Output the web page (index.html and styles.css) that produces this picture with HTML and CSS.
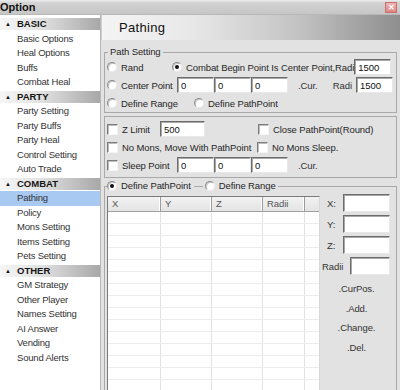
FILE: index.html
```html
<!DOCTYPE html>
<html>
<head>
<meta charset="utf-8">
<link rel="stylesheet" href="styles.css">
</head>
<body>
<div class="titlebar"><span class="title">Option</span><span class="close">✕</span></div>
<div class="window">
  <nav class="sidebar">
    <div class="cat"><span class="tri">▲</span>BASIC</div>
    <div class="item">Basic Options</div>
    <div class="item">Heal Options</div>
    <div class="item">Buffs</div>
    <div class="item">Combat Heal</div>
    <div class="cat"><span class="tri">▲</span>PARTY</div>
    <div class="item">Party Setting</div>
    <div class="item">Party Buffs</div>
    <div class="item">Party Heal</div>
    <div class="item">Control Setting</div>
    <div class="item">Auto Trade</div>
    <div class="cat"><span class="tri">▲</span>COMBAT</div>
    <div class="item sel">Pathing</div>
    <div class="item">Policy</div>
    <div class="item">Mons Setting</div>
    <div class="item">Items Setting</div>
    <div class="item">Pets Setting</div>
    <div class="cat"><span class="tri">▲</span>OTHER</div>
    <div class="item">GM Strategy</div>
    <div class="item">Other Player</div>
    <div class="item">Names Setting</div>
    <div class="item">AI Answer</div>
    <div class="item">Vending</div>
    <div class="item">Sound Alerts</div>
  </nav>
  <main class="main">
    <div class="main-head">Pathing</div>
    <div class="content">
      <fieldset class="group g1">
        <legend>Path Setting</legend>
        <div class="row">
          <span class="opt w65"><span class="radio"></span>Rand</span>
          <span class="opt"><span class="radio on"></span>Combat Begin Point Is Center Point,Radi</span>
          <input class="tb w37 push" value="1500" readonly>
        </div>
        <div class="row">
          <span class="opt w70"><span class="radio"></span>Center Point</span>
          <input class="tb w37 mr1" value="0" readonly>
          <input class="tb w37 mr1" value="0" readonly>
          <input class="tb w37" value="0" readonly>
          <span class="cur">.Cur.</span>
          <span class="radi push">Radi</span>
          <input class="tb w37" value="1500" readonly>
        </div>
        <div class="row">
          <span class="opt w87"><span class="radio"></span>Define Range</span>
          <span class="opt"><span class="radio"></span>Define PathPoint</span>
        </div>
      </fieldset>

      <fieldset class="group g2">
        <div class="row">
          <span class="opt w38"><span class="check"></span>Z Limit</span>
          <input class="tb w45" value="500" readonly>
          <span class="opt c2"><span class="check"></span>Close PathPoint(Round)</span>
        </div>
        <div class="row">
          <span class="opt w150"><span class="check"></span>No Mons, Move With PathPoint</span>
          <span class="opt"><span class="check"></span>No Mons Sleep.</span>
        </div>
        <div class="row">
          <span class="opt w70"><span class="check"></span>Sleep Point</span>
          <input class="tb w37 mr1" value="0" readonly>
          <input class="tb w37 mr1" value="0" readonly>
          <input class="tb w37" value="0" readonly>
          <span class="cur">.Cur.</span>
        </div>
      </fieldset>

      <fieldset class="group g3">
        <legend><span class="opt"><span class="radio on"></span>Define PathPoint</span><span class="dash"></span><span class="opt"><span class="radio"></span>Define Range</span></legend>
        <div class="g3-body">
          <div class="list">
            <div class="lrow lhead"><span class="c1">X</span><span class="c2">Y</span><span class="c3">Z</span><span class="c4">Radii</span><span class="c5"></span></div>
            <div class="lrow"><span class="c1"></span><span class="c2"></span><span class="c3"></span><span class="c4"></span><span class="c5"></span></div>
            <div class="lrow"><span class="c1"></span><span class="c2"></span><span class="c3"></span><span class="c4"></span><span class="c5"></span></div>
            <div class="lrow"><span class="c1"></span><span class="c2"></span><span class="c3"></span><span class="c4"></span><span class="c5"></span></div>
            <div class="lrow"><span class="c1"></span><span class="c2"></span><span class="c3"></span><span class="c4"></span><span class="c5"></span></div>
            <div class="lrow"><span class="c1"></span><span class="c2"></span><span class="c3"></span><span class="c4"></span><span class="c5"></span></div>
            <div class="lrow"><span class="c1"></span><span class="c2"></span><span class="c3"></span><span class="c4"></span><span class="c5"></span></div>
            <div class="lrow"><span class="c1"></span><span class="c2"></span><span class="c3"></span><span class="c4"></span><span class="c5"></span></div>
            <div class="lrow"><span class="c1"></span><span class="c2"></span><span class="c3"></span><span class="c4"></span><span class="c5"></span></div>
            <div class="lrow"><span class="c1"></span><span class="c2"></span><span class="c3"></span><span class="c4"></span><span class="c5"></span></div>
            <div class="lrow"><span class="c1"></span><span class="c2"></span><span class="c3"></span><span class="c4"></span><span class="c5"></span></div>
            <div class="lrow"><span class="c1"></span><span class="c2"></span><span class="c3"></span><span class="c4"></span><span class="c5"></span></div>
            <div class="lrow"><span class="c1"></span><span class="c2"></span><span class="c3"></span><span class="c4"></span><span class="c5"></span></div>
            <div class="lrow"><span class="c1"></span><span class="c2"></span><span class="c3"></span><span class="c4"></span><span class="c5"></span></div>
            <div class="lrow"><span class="c1"></span><span class="c2"></span><span class="c3"></span><span class="c4"></span><span class="c5"></span></div>
            <div class="lrow"><span class="c1"></span><span class="c2"></span><span class="c3"></span><span class="c4"></span><span class="c5"></span></div>
          </div>
          <div class="side">
            <div class="field"><span class="flab">X:</span><input class="tb fx" value="" readonly></div>
            <div class="field"><span class="flab">Y:</span><input class="tb fx" value="" readonly></div>
            <div class="field"><span class="flab">Z:</span><input class="tb fx" value="" readonly></div>
            <div class="field"><span class="flab rl">Radii</span><input class="tb fr" value="" readonly></div>
            <div class="btn first">.CurPos.</div>
            <div class="btn">.Add.</div>
            <div class="btn">.Change.</div>
            <div class="btn">.Del.</div>
          </div>
        </div>
      </fieldset>
    </div>
  </main>
</div>
</body>
</html>
```

FILE: styles.css
```css
* { box-sizing: border-box; }
html, body { margin: 0; padding: 0; }
body {
  width: 400px;
  height: 390px;
  overflow: hidden;
  font-family: "Liberation Sans", Arial, sans-serif;
  font-size: 9.5px;
  letter-spacing: -0.1px;
  color: #262626;
  background: #e2e2e2;
}

.titlebar {
  height: 15px;
  display: flex;
  align-items: center;
  justify-content: space-between;
  background: linear-gradient(#ececec 0, #d2d2d2 3px, #c6c6c6 100%);
  border-bottom: 1px solid #b8b8b8;
}
.title {
  font-weight: bold;
  font-size: 11px;
  letter-spacing: 0;
  color: #111;
}
.close {
  width: 12px;
  height: 11px;
  margin-right: 3px;
  background: linear-gradient(#f0b4b4, #de8686);
  border: 1px solid #c87070;
  color: #fff;
  font-size: 8px;
  font-weight: bold;
  line-height: 9px;
  text-align: center;
}

.window {
  display: flex;
  height: 375px;
  overflow: hidden;
}

.sidebar {
  width: 101px;
  flex: none;
  background: #fff;
  border-right: 1px solid #b6b6b6;
  padding-top: 2px;
}
.cat, .item {
  height: 14.5px;
  line-height: 14.5px;
  padding-left: 17px;
  white-space: nowrap;
  letter-spacing: -0.2px;
}
.item { color: #333; }
.item.sel { background: #a8c9f2; }
.cat {
  position: relative;
  font-weight: bold;
  color: #141414;
  letter-spacing: 0;
  background: linear-gradient(to right, #f6f6f6 0%, #e2e2e2 40%, #a8a8a8 100%) no-repeat 0 50% / 100% 12px;
}
.tri {
  position: absolute;
  left: 5px;
  top: 0;
  font-size: 6px;
}

.main {
  flex: 1;
  display: flex;
  flex-direction: column;
  min-width: 0;
  overflow: hidden;
}
.main-head {
  height: 25px;
  flex: none;
  line-height: 25px;
  padding-left: 17px;
  font-size: 13px;
  letter-spacing: 0.3px;
  color: #111;
  background: linear-gradient(to right, #f4f4f4 0%, #e8e8e8 30%, #c4c4c4 65%, #8e8e8e 100%);
  border-left: 1px solid #cfcfcf;
}
.content {
  padding: 6px 3px 0 3px;
}

.group {
  margin: 0;
  padding: 0 3px 0 2px;
  border: 1px solid #a9a9a9;
  min-width: 0;
}
.group legend {
  line-height: 12px;
  height: 12px;
  padding: 0 2px;
  margin-left: 1px;
}
.g2 {
  margin-top: 3px;
  padding-top: 3px;
  padding-bottom: 3px;
}
.g3 {
  margin-top: 2px;
  padding-top: 4px;
  height: 210px;
  border-bottom: none;
}
.g3 legend {
  display: flex;
  align-items: center;
  padding: 0 2px 0 0;
  margin-left: 0;
}

.row {
  height: 18px;
  display: flex;
  align-items: center;
  white-space: nowrap;
}
.opt {
  display: inline-flex;
  align-items: center;
  gap: 4px;
  white-space: nowrap;
}
.w65 { width: 65px; }
.w70 { width: 70px; }
.w87 { width: 87px; }
.w38 { width: 53px; }
.w150 { width: 150px; }
.c2.opt { margin-left: 53px; }
.push { margin-left: auto; }
.mr1 { margin-right: 2px; }

.radio {
  position: relative;
  width: 10px;
  height: 10px;
  flex: none;
  border-radius: 50%;
  background: #fff;
  border: 1px solid;
  border-color: #8c8c8c #ececec #ececec #8c8c8c;
  box-shadow: inset 1px 1px 0 #c4c4c4;
}
.radio.on::after {
  content: "";
  position: absolute;
  left: 2px;
  top: 2px;
  width: 4px;
  height: 4px;
  border-radius: 50%;
  background: #111;
}
.check {
  width: 11px;
  height: 11px;
  flex: none;
  background: #fff;
  border: 1px solid;
  border-color: #7c7c7c #f4f4f4 #f4f4f4 #7c7c7c;
  box-shadow: inset 1px 1px 0 #bcbcbc;
}
.dash {
  width: 9px;
  height: 1px;
  margin: 0 2px 0 3px;
  background: #a9a9a9;
}

.tb {
  height: 16px;
  padding: 0 3px;
  margin: 0;
  font-family: "Liberation Sans", Arial, sans-serif;
  font-size: 9.5px;
  color: #111;
  background: #fff;
  border: 1px solid;
  border-color: #6c6c6c #e8e8e8 #e8e8e8 #6c6c6c;
  box-shadow: inset 1px 1px 0 #a8a8a8;
  outline: none;
}
.w37 { width: 37px; }
.w45 { width: 45px; }
.cur { margin-left: 10px; color: #333; }
.radi { margin-right: 4px; color: #333; }

.g3-body {
  display: flex;
  align-items: flex-start;
}
.list {
  width: 213px;
  flex: none;
  height: 194px;
  background: #fff;
  border: 1px solid;
  border-bottom: none;
  border-color: #7a7a7a #d8d8d8 #d8d8d8 #7a7a7a;
  overflow: hidden;
}
.lrow {
  display: flex;
  height: 12px;
  border-bottom: 1px solid #ececec;
}
.lrow span {
  border-right: 1px solid #e2e2e2;
  flex: none;
}
.lrow .c1 { width: 53px; }
.lrow .c2 { width: 51px; }
.lrow .c3 { width: 51px; }
.lrow .c4 { width: 42px; }
.lrow .c5 { width: 14px; border-right: none; }
.lrow.lhead {
  height: 15px;
  line-height: 14px;
  background: linear-gradient(#f2f2f2, #e4e4e4);
  border-bottom: 1px solid #a0a0a0;
  color: #555;
}
.lhead span {
  padding-left: 4px;
  border-right: 1px solid #9c9c9c;
  box-shadow: inset -1px 0 0 #fff;
}
.lhead .c5 { border-right: none; box-shadow: none; }

.side {
  flex: 1;
  margin-top: -2px;
  display: flex;
  flex-direction: column;
}
.field {
  height: 18px;
  margin-bottom: 3px;
  display: flex;
  align-items: center;
  padding-left: 7px;
}
.flab { color: #333; }
.flab.rl { margin-left: -5px; }
.fx { width: 47px; height: 18px; margin-left: auto; margin-right: 3px; }
.fr { width: 40px; height: 18px; margin-left: auto; margin-right: 3px; }
.btn {
  height: 19.5px;
  line-height: 19.5px;
  text-align: center;
  color: #333;
}
.btn.first { margin-top: 1px; }
```
